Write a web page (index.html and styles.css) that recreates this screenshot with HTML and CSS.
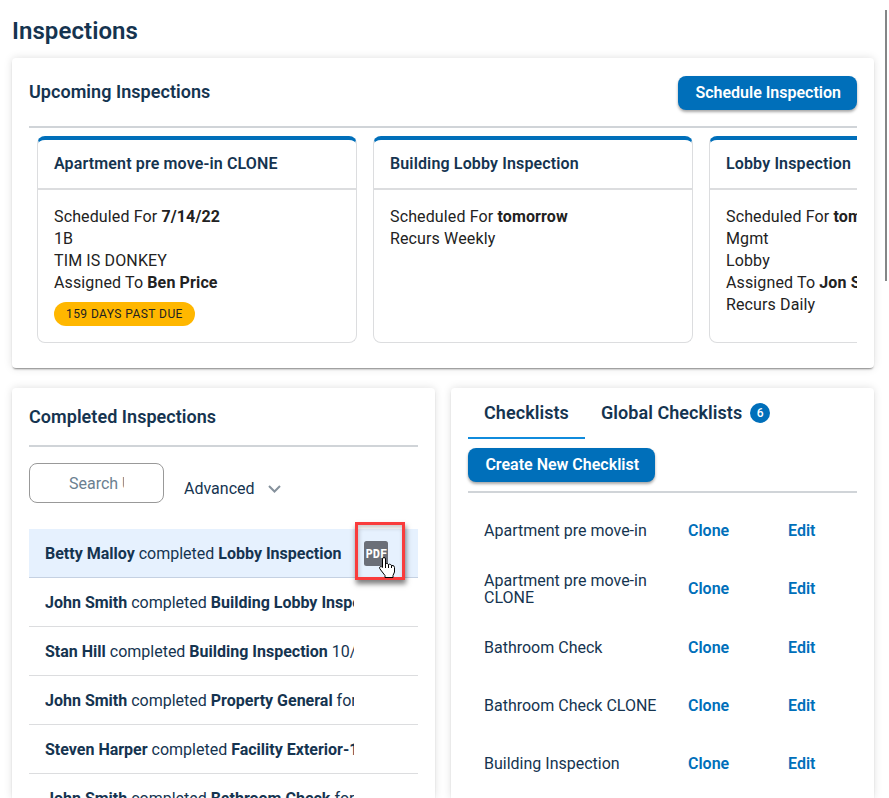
FILE: index.html
```
<!DOCTYPE html>
<html lang="en">
<head>
    <meta charset="UTF-8">
    <meta name="viewport" content="width=device-width, initial-scale=1.0">
    <title>Inspections</title>
    <link rel="stylesheet" href="styles.css">
</head>
<body>
<main class="page">
    <h1>Inspections</h1>

    <section class="card upcoming">
        <div class="card-header">
            <h2>Upcoming Inspections</h2>
            <button class="btn">Schedule Inspection</button>
        </div>
        <div class="inspection-list">
            <article class="inspection">
                <h3>Apartment pre move-in CLONE</h3>
                <div class="inspection-body">
                    <div>Scheduled For <b>7/14/22</b></div>
                    <div>1B</div>
                    <div>TIM IS DONKEY</div>
                    <div>Assigned To <b>Ben Price</b></div>
                    <span class="past-due">159 DAYS PAST DUE</span>
                </div>
            </article>
            <article class="inspection">
                <h3>Building Lobby Inspection</h3>
                <div class="inspection-body">
                    <div>Scheduled For <b>tomorrow</b></div>
                    <div>Recurs Weekly</div>
                </div>
            </article>
            <article class="inspection">
                <h3>Lobby Inspection</h3>
                <div class="inspection-body">
                    <div>Scheduled For <b>tomorrow</b></div>
                    <div>Mgmt</div>
                    <div>Lobby</div>
                    <div>Assigned To <b>Jon S</b></div>
                    <div>Recurs Daily</div>
                </div>
            </article>
        </div>
    </section>

    <div class="columns">
        <section class="card completed">
            <div class="card-header">
                <h2>Completed Inspections</h2>
            </div>
            <div class="search-row">
                <div class="search"><span>Search Units</span></div>
                <div class="advanced">
                    Advanced
                    <svg width="13" height="9" viewBox="0 0 13 9"><path d="M1 1l5.500 5.500 5.500-5.500" fill="none" stroke="#85919c" stroke-width="2"/></svg>
                </div>
            </div>
            <ul class="completed-list">
                <li class="active">
                    <div class="entry"><b>Betty Malloy</b> completed <b>Lobby Inspection</b></div>
                    <div class="pdf">
                        <svg class="pdf-icon" width="24" height="25" viewBox="0 0 24 25">
                            <rect width="24" height="25" rx="2.5" fill="#6b6f78"/>
                            <text x="1.500" y="17">PDF</text>
                        </svg>
                        <div class="highlight"></div>
                        <svg class="cursor" width="18" height="22" viewBox="0 0 18 22">
                            <path d="M3.500 2Q3.500.5 5 .5T6.500 2V7l1-.5q1.500 0 2 1l1-.3q1.400 0 1.800 1.200 3.200-.4 3.200 2.100v4.500l-1.500 3.500v2H6v-2L2.500 14 .7 11.500q-.5-1.700 1-2 1 0 1.800 1z" fill="#fff" stroke="#000"/>
                            <path d="M6.500 7v4M9.500 7.500V11M12.500 8.500V11" stroke="#000"/>
                        </svg>
                    </div>
                </li>
                <li><div class="entry"><b>John Smith</b> completed <b>Building Lobby Inspection</b></div></li>
                <li><div class="entry"><b>Stan Hill</b> completed <b>Building Inspection</b> 10/12</div></li>
                <li><div class="entry"><b>John Smith</b> completed <b>Property General</b> for Mgmt</div></li>
                <li><div class="entry"><b>Steven Harper</b> completed <b>Facility Exterior-1</b></div></li>
                <li><div class="entry"><b>John Smith</b> completed <b>Bathroom Check</b> for 1B</div></li>
            </ul>
        </section>

        <section class="card checklists">
            <div class="tabs">
                <div class="tab active">Checklists</div>
                <div class="tab">Global Checklists <span class="count">6</span></div>
            </div>
            <div class="create-row">
                <button class="btn">Create New Checklist</button>
            </div>
            <ul class="checklist-list">
                <li><span class="name">Apartment pre move-in</span><a>Clone</a><a>Edit</a></li>
                <li><span class="name">Apartment pre move-in CLONE</span><a>Clone</a><a>Edit</a></li>
                <li><span class="name">Bathroom Check</span><a>Clone</a><a>Edit</a></li>
                <li><span class="name">Bathroom Check CLONE</span><a>Clone</a><a>Edit</a></li>
                <li><span class="name">Building Inspection</span><a>Clone</a><a>Edit</a></li>
            </ul>
        </section>
    </div>
</main>
<div class="scroll-thumb"></div>
</body>
</html>
```
FILE: styles.css
```
* {
    box-sizing: border-box;
}

body {
    margin: 0;
    height: 798px;
    overflow: hidden;
    font-family: Roboto, sans-serif;
    font-size: 16px;
    line-height: 22px;
    color: #153450;
    background-color: #fff;
}

.page {
    width: 874px;
    padding: 16px 0 0 12px;
}

h1, h2, h3, ul {
    margin: 0;
    padding: 0;
}

h1 {
    font-size: 24px;
    line-height: 30px;
    font-weight: 600;
    letter-spacing: 0.07px;
    margin-bottom: 12px;
}

h2 {
    font-size: 18px;
    line-height: 24px;
    font-weight: 600;
    letter-spacing: 0.04px;
}

b {
    font-weight: 700;
}

ul {
    list-style: none;
}

.card {
    background-color: #fff;
    border-radius: 4px;
    padding: 0 17px;
    box-shadow: 0 2px 2px -1px rgba(0, 0, 0, 0.45), 0 0 8px rgba(0, 0, 0, 0.13);
}

.btn {
    height: 34px;
    padding: 0 16px 0 17.4px;
    border: none;
    border-radius: 8px;
    background-color: #006fba;
    color: #fff;
    font-family: inherit;
    font-size: 16px;
    line-height: 32px;
    font-weight: 600;
    white-space: nowrap;
    box-shadow: 0 2px 3px rgba(0, 0, 0, 0.35);
}

.card-header {
    display: flex;
    justify-content: space-between;
    align-items: center;
    border-bottom: 2px solid #d0d4d8;
}

/* Upcoming inspections */
.upcoming {
    height: 310px;
}

.upcoming .card-header {
    height: 70px;
}

.upcoming h2 {
    margin-bottom: 1px;
}

.upcoming .btn {
    width: 179px;
    margin-top: 2px;
}

.inspection-list {
    display: flex;
    gap: 16px;
    padding: 8px 0 0 8px;
    overflow: hidden;
}

.inspection {
    flex: 0 0 320px;
    height: 207px;
    border: 1px solid #dcdddf;
    border-top: 4px solid #006fba;
    border-radius: 8px;
}

.inspection h3 {
    height: 50px;
    padding: 0 16px;
    border-bottom: 2px solid #dcdddf;
    font-size: 16px;
    line-height: 47px;
    font-weight: 600;
    letter-spacing: 0.14px;
}

.inspection-body {
    padding: 16px;
    color: #222;
    letter-spacing: 0.13px;
    white-space: nowrap;
}

.past-due {
    display: inline-block;
    height: 24px;
    margin-top: 8px;
    padding: 0 12px;
    border-radius: 12px;
    background-color: #ffb700;
    font-size: 12px;
    line-height: 24px;
    letter-spacing: 0.43px;
}

/* Bottom columns */
.columns {
    display: flex;
    gap: 16px;
    margin-top: 20px;
}

.columns .card {
    flex: 1;
    min-width: 0;
    height: 410px;
    border-radius: 4px 4px 0 0;
}

.completed .card-header {
    height: 59px;
}

.search-row {
    display: flex;
    gap: 20px;
    padding: 16px 0 26px;
}

.search {
    width: 135px;
    height: 40px;
    padding: 0 39px;
    border: 1px solid #999;
    border-radius: 8px;
    color: #6b7f90;
    line-height: 40px;
}

.search span {
    display: block;
    height: 38px;
    overflow: hidden;
    white-space: nowrap;
}

.advanced {
    display: flex;
    align-items: center;
    gap: 13px;
    padding-top: 12px;
}

.completed-list {
    height: 269px;
    overflow: hidden;
}

.completed-list li {
    display: flex;
    height: 49px;
    padding-left: 16px;
    border-bottom: 1px solid #dcdddf;
    line-height: 50px;
}

.completed-list li.active {
    background-color: #e6f1fe;
    border-color: #c5d1e2;
}

.entry {
    width: 309px;
    height: 48px;
    overflow: hidden;
    white-space: nowrap;
}

.pdf {
    padding: 12px 0 0 10px;
}

.pdf-icon {
    display: block;
}

.pdf-icon text {
    fill: #fff;
    font-family: "DejaVu Sans Mono", monospace;
    font-size: 12px;
    font-weight: 700;
}

/* Both lie over the row, so they are placed against the card */
.completed {
    position: relative;
}

.highlight {
    position: absolute;
    left: 343px;
    top: 134px;
    width: 50px;
    height: 58px;
    border: 3px solid #f93c3c;
    box-shadow: 1px 4px 5px rgba(0, 0, 0, 0.5), inset 1px 3px 4px rgba(0, 0, 0, 0.2);
}

.cursor {
    position: absolute;
    left: 367px;
    top: 169px;
}

/* Checklists */
.tabs {
    display: flex;
    font-size: 18px;
    font-weight: 600;
    letter-spacing: 0.06px;
}

.tab {
    display: flex;
    align-items: center;
    gap: 8px;
    height: 51px;
    padding: 0 16px 1px;
}

.tab.active {
    border-bottom: 2px solid #108bdc;
    padding-bottom: 0;
}

.count {
    width: 20px;
    height: 20px;
    border-radius: 50%;
    background-color: #006fba;
    color: #fff;
    font-size: 12px;
    font-weight: 500;
    line-height: 20px;
    text-align: center;
}

.create-row {
    height: 54px;
    padding-top: 9px;
    border-bottom: 2px solid #d0d4d8;
}

.checklist-list {
    padding: 8.5px 16px 0;
}

.checklist-list li {
    display: grid;
    grid-template-columns: 204px 100px 1fr;
    align-items: center;
    height: 58.25px;
    line-height: 17px;
}

.checklist-list .name {
    padding-right: 24px;
}

.checklist-list a {
    color: #006fba;
    font-weight: 600;
}

/* Scrollbar of the page */
.scroll-thumb {
    position: absolute;
    left: 885px;
    top: 10px;
    width: 2px;
    height: 271px;
    background-color: #848687;
}
```
